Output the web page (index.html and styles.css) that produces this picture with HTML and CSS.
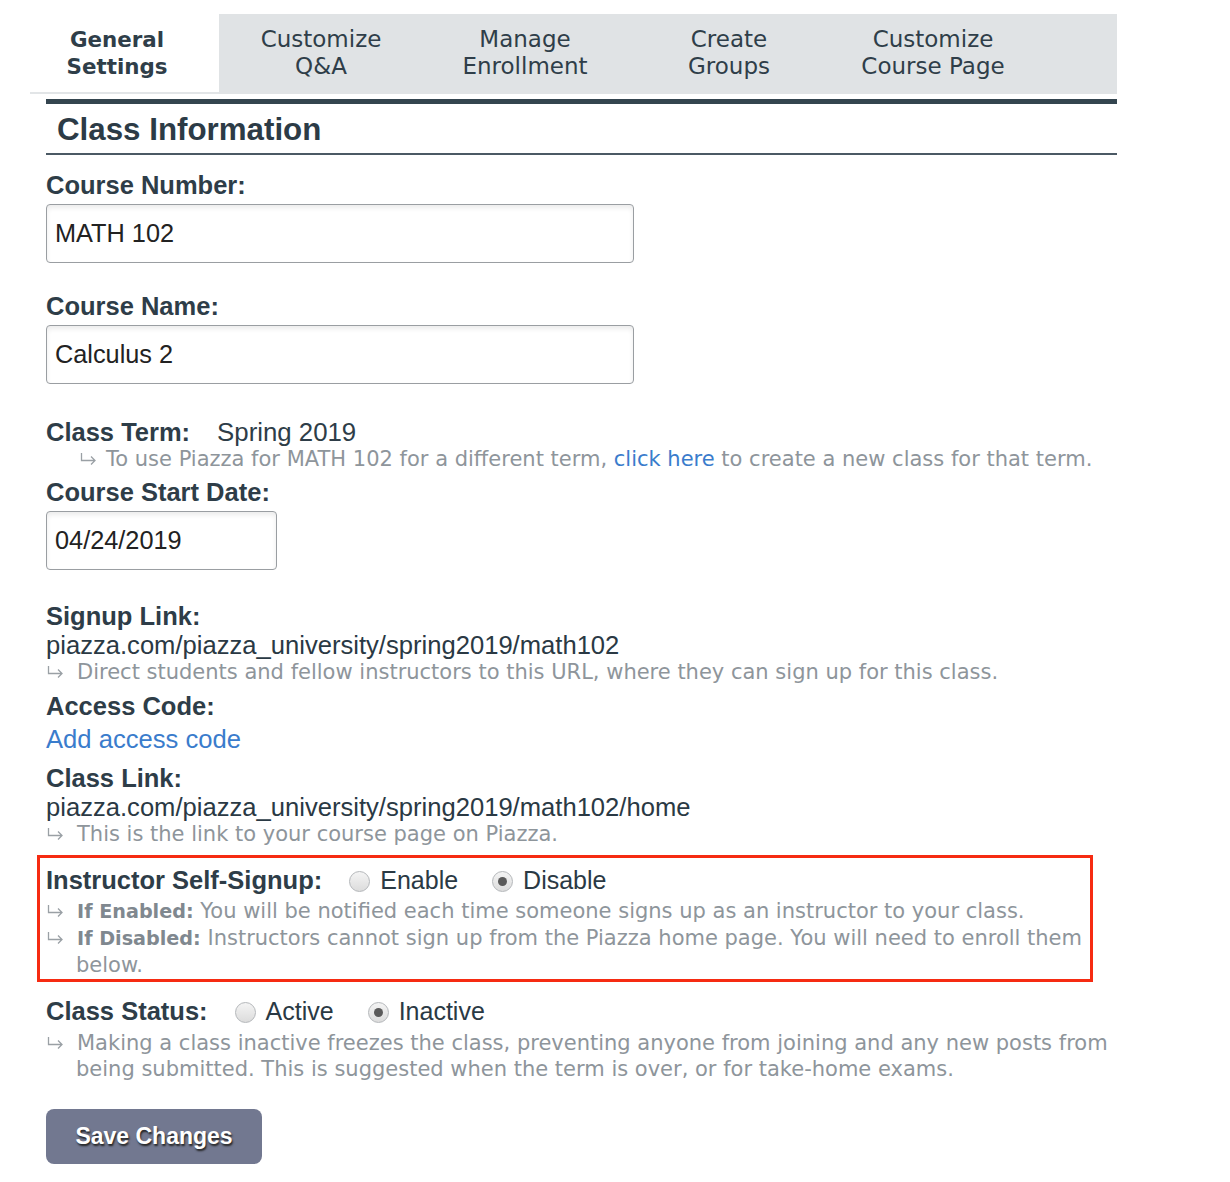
FILE: index.html
```html
<!DOCTYPE html>
<html lang="en">
<head>
    <meta charset="UTF-8">
    <title>Course Settings</title>
    <link rel="stylesheet" href="styles.css">
</head>
<body>
    <div class="tabs">
        <div class="tab active">General<br>Settings</div>
        <div class="tab">Customize<br>Q&amp;A</div>
        <div class="tab">Manage<br>Enrollment</div>
        <div class="tab">Create<br>Groups</div>
        <div class="tab">Customize<br>Course Page</div>
    </div>

    <div class="panel">
        <h2 class="section-title">Class Information</h2>

        <div class="field-label first">Course Number:</div>
        <input class="text-input" type="text" value="MATH 102">

        <div class="field-label spaced">Course Name:</div>
        <input class="text-input" type="text" value="Calculus 2">

        <div class="term-row">
            <span class="inline-label">Class Term:</span>
            <span class="value">Spring 2019</span>
        </div>
        <div class="help indent"><svg class="hook" viewBox="0 0 16 12"><path d="M1.5 0V7.5H15M11 3.5L15 7.5L11 11.5"/></svg>To use Piazza for MATH 102 for a different term, <a class="link" href="#">click here</a> to create a new class for that term.</div>

        <div class="field-label tight">Course Start Date:</div>
        <input class="text-input short" type="text" value="04/24/2019">

        <div class="field-label spaced wide no-gap">Signup Link:</div>
        <div class="value-line">piazza.com/piazza_university/spring2019/math102</div>
        <div class="help"><svg class="hook" viewBox="0 0 16 12"><path d="M1.5 0V7.5H15M11 3.5L15 7.5L11 11.5"/></svg>Direct students and fellow instructors to this URL, where they can sign up for this class.</div>

        <div class="field-label small-gap">Access Code:</div>
        <div class="value-line link-line"><a class="link" href="#">Add access code</a></div>

        <div class="field-label mid-gap">Class Link:</div>
        <div class="value-line">piazza.com/piazza_university/spring2019/math102/home</div>
        <div class="help"><svg class="hook" viewBox="0 0 16 12"><path d="M1.5 0V7.5H15M11 3.5L15 7.5L11 11.5"/></svg>This is the link to your course page on Piazza.</div>

        <div class="highlight">
            <div class="option-row">
                <span class="inline-label">Instructor Self-Signup:</span>
                <label class="option"><input type="radio" name="selfsignup"> Enable</label>
                <label class="option"><input type="radio" name="selfsignup" checked> Disable</label>
            </div>
            <div class="help"><svg class="hook" viewBox="0 0 16 12"><path d="M1.5 0V7.5H15M11 3.5L15 7.5L11 11.5"/></svg><b>If Enabled:</b> You will be notified each time someone signs up as an instructor to your class.</div>
            <div class="help"><svg class="hook" viewBox="0 0 16 12"><path d="M1.5 0V7.5H15M11 3.5L15 7.5L11 11.5"/></svg><b>If Disabled:</b> Instructors cannot sign up from the Piazza home page. You will need to enroll them below.</div>
        </div>

        <div class="option-row status-row">
            <span class="inline-label">Class Status:</span>
            <label class="option"><input type="radio" name="status"> Active</label>
            <label class="option"><input type="radio" name="status" checked> Inactive</label>
        </div>
        <div class="help"><svg class="hook" viewBox="0 0 16 12"><path d="M1.5 0V7.5H15M11 3.5L15 7.5L11 11.5"/></svg>Making a class inactive freezes the class, preventing anyone from joining and any new posts from being submitted. This is suggested when the term is over, or for take-home exams.</div>

        <button class="save-button">Save Changes</button>
    </div>
</body>
</html>
```

FILE: styles.css
```css
/* Global */
body {
    margin: 0;
    padding: 0;
    background: #fff;
    font-family: "Liberation Sans", Arial, sans-serif;
    color: #2e3d48;
}

/* Tabs */
.tabs {
    display: flex;
    margin: 14px 0 0 15px;
    width: 1102px;
    height: 80px;
    background-color: #e0e3e5;
}

.tab {
    width: 204px;
    display: flex;
    align-items: center;
    justify-content: center;
    text-align: center;
    font-family: "DejaVu Sans", Verdana, sans-serif;
    font-size: 23px;
    line-height: 27px;
    color: #2f3e49;
    padding-bottom: 3px;
    box-sizing: border-box;
}

.tab.active {
    background: #fff linear-gradient(#e2e5e7, #e2e5e7) no-repeat 15px 100% / 189px 2px;
    font-weight: bold;
    font-size: 21.4px;
}

/* Panel */
.panel {
    margin: 5px 0 40px 46px;
    width: 1071px;
    border-top: 5px solid #34454f;
}

.section-title {
    margin: 8px 0 0;
    padding: 0 0 5px 11px;
    font-size: 31.3px;
    line-height: 36px;
    color: #2c3b46;
    border-bottom: 2px solid #4b5964;
}

.field-label,
.inline-label {
    font-size: 25.5px;
    font-weight: bold;
    line-height: 30px;
    color: #2e3d48;
}

.field-label { margin-bottom: 4px; }
.field-label.first { margin-top: 15px; }
.field-label.spaced { margin-top: 28px; }
.field-label.spaced.wide { margin-top: 31px; }
.field-label.no-gap { margin-bottom: 0; }
.field-label.tight { margin-top: 5px; }
.field-label.small-gap { margin-top: 6px; margin-bottom: 0; }
.field-label.mid-gap { margin-top: 10px; margin-bottom: 0; }

.text-input {
    display: block;
    width: 588px;
    height: 59px;
    box-sizing: border-box;
    padding: 0 8px;
    border: 1px solid #9a9ea2;
    border-radius: 4px;
    box-shadow: inset 0 3px 5px rgba(0, 0, 0, 0.08);
    font-family: "Liberation Sans", Arial, sans-serif;
    font-size: 25.3px;
    color: #222;
    background: #fff;
}

.text-input.short { width: 231px; }

.term-row {
    margin-top: 34px;
    height: 28px;
    display: flex;
    align-items: center;
}

.term-row .value {
    margin-left: 27px;
    font-size: 25.8px;
}

.value-line {
    font-size: 25.6px;
    line-height: 28px;
    color: #2a3944;
}

.link-line { margin-top: 4px; }

.link {
    color: #3a7ccc;
    text-decoration: none;
}

/* Help text with hook arrow */
.help {
    font-family: "DejaVu Sans", Verdana, sans-serif;
    font-size: 21px;
    line-height: 26px;
    color: #8e959b;
    padding-left: 30px;
    text-indent: -30px;
}

.hook {
    width: 16px;
    height: 12px;
    margin: 0 14px 0 1px;
    vertical-align: 1px;
    fill: none;
    stroke: #9aa0a5;
    stroke-width: 1.3;
}

.help.indent { margin-left: 29px; }
.help.indent .hook { margin: 0 10px 0 5px; }

.help b {
    color: #80888f;
    font-size: 19.2px;
}

/* Red annotation box */
.highlight {
    margin: 8px 24px 0 -9px;
    padding: 7px 0 1px 6px;
    border: 3px solid #f62b12;
}

.option-row {
    display: flex;
    align-items: center;
    line-height: 30px;
    margin-bottom: 3px;
}

.option {
    display: flex;
    align-items: center;
    font-size: 25px;
    color: #2a3944;
    margin-left: 27px;
}

.option + .option { margin-left: 34px; }

.option input {
    appearance: none;
    -webkit-appearance: none;
    width: 21px;
    height: 21px;
    margin: 2px 10px 0 0;
    border: 1px solid #b4b7ba;
    border-radius: 50%;
    background: linear-gradient(#f4f4f4, #dcdcdc);
    box-sizing: border-box;
    position: relative;
}

.option input:checked::after {
    content: "";
    position: absolute;
    top: 5px;
    left: 5px;
    width: 9px;
    height: 9px;
    border-radius: 50%;
    background: #5a5a5a;
}

.status-row {
    margin-top: 14px;
    margin-bottom: 4px;
}

/* Save button */
.save-button {
    display: block;
    margin-top: 27px;
    width: 216px;
    height: 55px;
    border: none;
    border-radius: 8px;
    background-color: #727890;
    color: #fff;
    font-family: "Liberation Sans", Arial, sans-serif;
    font-weight: bold;
    font-size: 23px;
    text-shadow: 1px 2px 2px #222;
    cursor: pointer;
}
```
